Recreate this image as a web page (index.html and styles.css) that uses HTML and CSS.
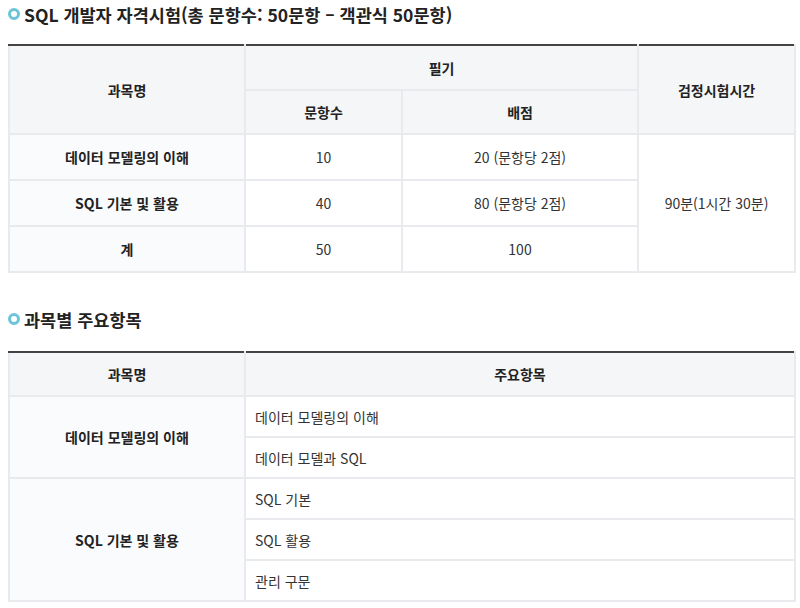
FILE: index.html
```html
<!DOCTYPE html>
<html lang="ko">
<head>
<meta charset="utf-8">
<link rel="stylesheet" href="styles.css">
</head>
<body>
<h2 class="title"><span class="dot"></span>SQL 개발자 자격시험(총 문항수: 50문항 – 객관식 50문항)</h2>
<table class="tbl t1">
  <colgroup><col class="c1"><col class="c2"><col class="c3"><col class="c4"></colgroup>
  <tr class="hr1"><th rowspan="2">과목명</th><th colspan="2">필기</th><th rowspan="2">검정시험시간</th></tr>
  <tr class="hr2"><th>문항수</th><th>배점</th></tr>
  <tr class="br"><th class="sub">데이터 모델링의 이해</th><td>10</td><td>20 (문항당 2점)</td><td rowspan="3">90분(1시간 30분)</td></tr>
  <tr class="br"><th class="sub">SQL 기본 및 활용</th><td>40</td><td>80 (문항당 2점)</td></tr>
  <tr class="br"><th class="sub">계</th><td>50</td><td>100</td></tr>
</table>
<h2 class="title second"><span class="dot"></span>과목별 주요항목</h2>
<table class="tbl t2">
  <colgroup><col class="c1"><col class="cw"></colgroup>
  <tr class="hr3"><th>과목명</th><th>주요항목</th></tr>
  <tr class="br2"><th class="sub" rowspan="2">데이터 모델링의 이해</th><td class="left">데이터 모델링의 이해</td></tr>
  <tr class="br2"><td class="left">데이터 모델과 SQL</td></tr>
  <tr class="br2"><th class="sub" rowspan="3">SQL 기본 및 활용</th><td class="left">SQL 기본</td></tr>
  <tr class="br2"><td class="left">SQL 활용</td></tr>
  <tr class="br2"><td class="left">관리 구문</td></tr>
</table>
</body>
</html>
```
FILE: styles.css
```css
html, body {
  margin: 0;
  padding: 0;
  background: #fff;
}
body {
  padding: 0 6px 0 8px;
  font-family: "Noto Sans CJK KR", "Noto Sans", sans-serif;
  color: #333;
}
.title {
  display: flex;
  align-items: center;
  gap: 4px;
  margin: 0 0 16px 0;
  height: 28px;
  font-size: 17.5px;
  font-weight: 700;
  color: #222;
}
.title.second {
  margin-top: 32px;
  margin-bottom: 18px;
}
.dot {
  width: 6px;
  height: 6px;
  border: 3px solid #6cc4d8;
  border-radius: 50%;
  flex: none;
}
.tbl {
  width: 786px;
  border-collapse: collapse;
  table-layout: fixed;
  border-top: 2px solid #444;
  font-size: 14px;
}
.tbl th, .tbl td {
  border: 2px solid #e8eaed;
  text-align: center;
  vertical-align: middle;
  padding: 0 10px;
}
.tbl tr:first-child th {
  border-top: 2px solid #444;
}
.tbl th {
  background: #f5f6f8;
  font-weight: 700;
  font-size: 14px;
  color: #222;
}
.tbl th.sub {
  background: #fafbfc;
}
.tbl td {
  color: #333;
}
.tbl td.left {
  text-align: left;
  padding-left: 9px;
}
.c1 { width: 236px; }
.c2 { width: 157px; }
.c3 { width: 236px; }
.c4 { width: 157px; }
.cw { width: 550px; }
.hr1 { height: 45px; }
.hr2 { height: 44px; }
.br { height: 46px; }
.hr3 { height: 44px; }
.br2 { height: 41px; }
```
